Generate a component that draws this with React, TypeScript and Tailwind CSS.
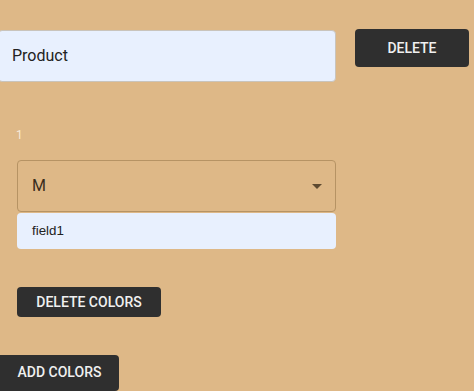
import React from "react";

export default function App() {
  return (
    <div className="w-[474px] h-[391px] overflow-hidden bg-[#deb887] flex flex-col items-start font-['Roboto',sans-serif]">
      <div className="flex flex-row items-start mt-[30px]">
        <div className="-ml-[2px] w-[338px] h-[52px] bg-[#e8f0fe] border border-[#c9c4bc] rounded-[4px] flex items-center pl-[13px] text-[16px] text-[#222] leading-none">
          Product
        </div>
        <button className="ml-[19px] -mt-px w-[114px] h-[38px] bg-[#2f2f2f] rounded-[4px] text-[#f0f0f0] text-[14px] font-medium uppercase flex items-center justify-center leading-none">
          DELETE
        </button>
      </div>
      <div className="mt-[45px] ml-[16px] text-[12px] leading-[16px] text-[#f6ead9]">1</div>
      <div className="ml-[17px] mt-[17px] w-[319px] flex flex-col">
        <div className="h-[52px] border border-[#b69364] rounded-[4px] flex items-center justify-between pl-[14px] pr-[12px]">
          <span className="text-[16px] text-[#3a2d1c] leading-none">M</span>
          <svg width="10" height="5" viewBox="0 0 10 5" className="mr-[1px]">
            <path d="M0 0 L10 0 L5 5 Z" fill="#5e4a30" />
          </svg>
        </div>
        <div className="mt-px h-[36px] bg-[#e8f0fe] rounded-[4px] flex items-center pl-[15px] text-[13.33px] text-[#222] font-['Liberation_Sans',Arial,sans-serif] leading-none">
          field1
        </div>
      </div>
      <button className="ml-[17px] mt-[38px] w-[144px] h-[33px] bg-[#2f2f2f] rounded-[4px] text-[#f0f0f0] text-[14px] font-medium flex items-center justify-center leading-none">
        DELETE COLORS
      </button>
      <button className="-ml-[4px] mt-[38px] w-[123px] h-[36px] shrink-0 bg-[#2f2f2f] rounded-[4px] text-[#f0f0f0] text-[14px] font-medium flex items-center justify-center leading-none pb-[2px] pl-[4px]">
        ADD COLORS
      </button>
    </div>
  );
}
